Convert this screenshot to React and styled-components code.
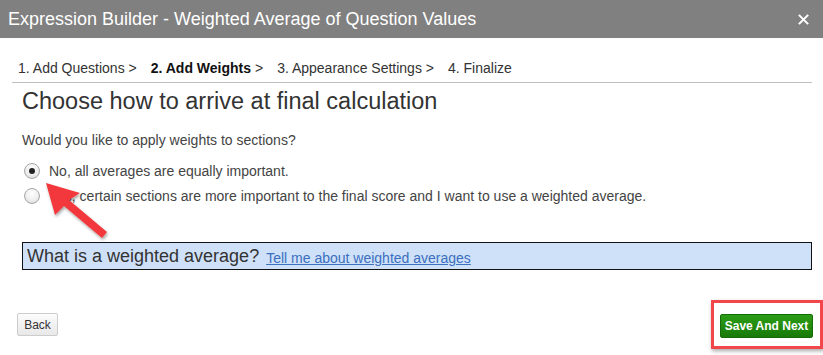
import styled, { createGlobalStyle } from "styled-components"

const GlobalStyle = createGlobalStyle`
    body {
        margin: 0;
        background: #ffffff;
        font-family: "Liberation Sans", Arial, sans-serif;
    }
`

function Radio({ checked }) {
    return (
        <RadioCircle>
            {checked ? <RadioDot /> : null}
        </RadioCircle>
    )
}

function App() {
    return (
        <Page>
            <GlobalStyle />
            <TitleBar>
                <Title>Expression Builder - Weighted Average of Question Values</Title>
                <CloseIcon viewBox="0 0 14 14">
                    <path d="M2 2 L12 12 M12 2 L2 12" stroke="#ffffff" strokeWidth="2.2" />
                </CloseIcon>
            </TitleBar>
            <Body>
                <Steps>
                    <Step>1. Add Questions &gt;</Step>
                    <Step $active>2. Add Weights <Arrowish>&gt;</Arrowish></Step>
                    <Step>3. Appearance Settings &gt;</Step>
                    <Step>4. Finalize</Step>
                </Steps>
                <Content>
                    <Heading>Choose how to arrive at final calculation</Heading>
                    <Question>Would you like to apply weights to sections?</Question>
                    <Options>
                        <Option>
                            <Radio checked />
                            <span>No, all averages are equally important.</span>
                        </Option>
                        <Option>
                            <Radio />
                            <span>Yes, certain sections are more important to the final score and I want to use a weighted average.</span>
                        </Option>
                    </Options>
                    <InfoBox>
                        <InfoTitle>What is a weighted average?</InfoTitle>
                        <InfoLink href="#">Tell me about weighted averages</InfoLink>
                    </InfoBox>
                </Content>
            </Body>
            <Footer>
                <BackButton>Back</BackButton>
                <Highlight>
                    <SaveButton>Save And Next</SaveButton>
                </Highlight>
            </Footer>
            <Pointer viewBox="0 0 130 80">
                <defs>
                    <filter id="shadow" x="-20%" y="-20%" width="140%" height="140%">
                        <feDropShadow dx="1" dy="2" stdDeviation="1.5" floodColor="#000" floodOpacity="0.35" />
                    </filter>
                </defs>
                <g filter="url(#shadow)" fill="#f2393c">
                    <polygon points="46,183 80,193 69,200 107,232 102,238 64,206 55,215" transform="translate(-40,-170)" />
                </g>
            </Pointer>
        </Page>
    )
}

const Page = styled.div`
    position: relative;
    width: 823px;
    height: 355px;
    overflow: hidden;
    background: #ffffff;
    color: #333333;
`

const TitleBar = styled.div`
    height: 38px;
    background: #808080;
    display: flex;
    align-items: center;
    justify-content: space-between;
    padding: 0 13px 0 8px;
`

const Title = styled.div`
    color: #ffffff;
    font-size: 18px;
`

const CloseIcon = styled.svg`
    width: 13px;
    height: 13px;
`

const Body = styled.div`
    padding: 0 11px 0 12px;
`

const Steps = styled.div`
    display: flex;
    gap: 14px;
    padding: 22px 0 6px 6px;
    border-bottom: 1px solid #c0c0c0;
    font-size: 14px;
    color: #333333;
`

const Step = styled.span`
    font-weight: ${props => props.$active ? "bold" : "normal"};
    color: ${props => props.$active ? "#111111" : "#333333"};
`

const Arrowish = styled.span`
    font-weight: normal;
    color: #333333;
`

const Content = styled.div`
    padding-left: 10px;
`

const Heading = styled.h2`
    margin: 5px 0 0;
    font-size: 23.5px;
    font-weight: normal;
    color: #333333;
`

const Question = styled.p`
    margin: 17px 0 0;
    font-size: 14px;
    color: #444444;
`

const Options = styled.div`
    display: flex;
    flex-direction: column;
    gap: 9px;
    margin-top: 15px;
`

const Option = styled.label`
    display: flex;
    align-items: center;
    gap: 9px;
    font-size: 14px;
    color: #444444;
    padding-left: 2px;
`

const RadioCircle = styled.span`
    width: 16px;
    height: 16px;
    border-radius: 50%;
    box-sizing: border-box;
    border: 1px solid #a8a8a8;
    background: radial-gradient(circle at 50% 35%, #ffffff 0%, #eeeeee 55%, #cfcfcf 100%);
    display: flex;
    align-items: center;
    justify-content: center;
`

const RadioDot = styled.span`
    width: 6px;
    height: 6px;
    border-radius: 50%;
    background: #222222;
`

const InfoBox = styled.div`
    margin-top: 38px;
    height: 28px;
    box-sizing: border-box;
    border: 1px solid #111111;
    background: #cfe1f8;
    display: flex;
    align-items: center;
    gap: 7px;
    padding-left: 4px;
`

const InfoTitle = styled.span`
    font-size: 18px;
    color: #333333;
`

const InfoLink = styled.a`
    font-size: 14px;
    color: #3b6fc0;
    text-decoration: underline;
    margin-top: 3px;
`

const Footer = styled.div`
    display: flex;
    align-items: center;
    justify-content: space-between;
    padding: 30px 0 0 17px;
`

const BackButton = styled.button`
    width: 41px;
    height: 23px;
    padding: 0;
    font-family: "Liberation Sans", Arial, sans-serif;
    font-size: 12px;
    color: #333333;
    border: 1px solid #cccccc;
    border-radius: 2px;
    background: linear-gradient(#fcfcfc, #e8e8e8);
`

const Highlight = styled.div`
    border: 3px solid #f2474a;
    padding: 11px 7px 8px 6px;
    box-shadow: 1px 2px 4px rgba(0, 0, 0, 0.35);
`

const SaveButton = styled.button`
    width: 93px;
    height: 24px;
    padding: 0;
    font-family: "Liberation Sans", Arial, sans-serif;
    font-size: 12px;
    font-weight: bold;
    color: #ffffff;
    border: 1px solid #176b08;
    border-radius: 2px;
    background: linear-gradient(#2c9c16, #187a08);
    display: block;
`

const Pointer = styled.svg`
    position: absolute;
    left: 40px;
    top: 170px;
    width: 130px;
    height: 80px;
    overflow: visible;
`

export default App
